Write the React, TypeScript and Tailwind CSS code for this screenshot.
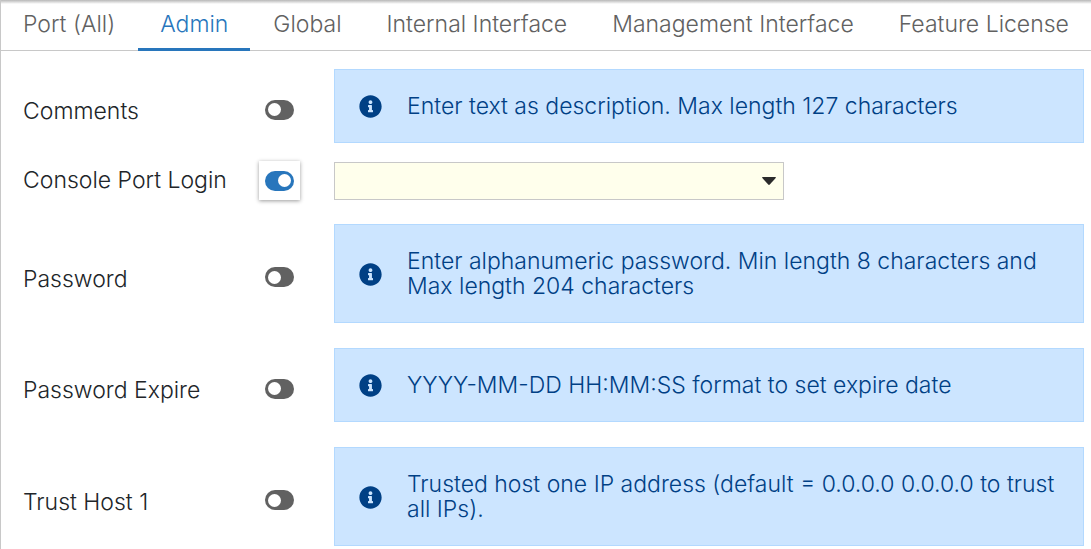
import { useState } from 'react'
import { FaInfoCircle } from 'react-icons/fa'
import { clsx } from 'clsx'

const TABS = [
  'Port (All)',
  'Admin',
  'Global',
  'Internal Interface',
  'Management Interface',
  'Feature License',
]

interface Setting {
  id: string
  label: string
  hint?: string
}

const SETTINGS: Setting[] = [
  { id: 'comments', label: 'Comments', hint: 'Enter text as description. Max length 127 characters' },
  { id: 'console-login', label: 'Console Port Login' },
  {
    id: 'password',
    label: 'Password',
    hint: 'Enter alphanumeric password. Min length 8 characters and Max length 204 characters',
  },
  { id: 'password-expire', label: 'Password Expire', hint: 'YYYY-MM-DD HH:MM:SS format to set expire date' },
  {
    id: 'trust-host-1',
    label: 'Trust Host 1',
    hint: 'Trusted host one IP address (default = 0.0.0.0 0.0.0.0 to trust all IPs).',
  },
]

function Toggle({ id, checked, onChange }: { id: string; checked: boolean; onChange: () => void }) {
  return (
    <span
      className={clsx(
        'flex h-[39px] w-[41px] items-center justify-center bg-white',
        checked ? 'shadow-[0_1px_4px_rgba(0,0,0,0.4)]' : 'mb-1'
      )}
    >
      <input
        id={id}
        type="checkbox"
        checked={checked}
        onChange={onChange}
        className="flex h-5 w-[29px] cursor-pointer appearance-none items-center rounded-full bg-[#616161] px-[3px] before:size-[13px] before:rounded-full before:bg-white checked:justify-end checked:bg-[#2876bc]"
      />
    </span>
  )
}

function InfoBox({ text }: { text: string }) {
  return (
    <div className="mb-[11px] flex items-center gap-[25px] border border-[#b3d9ff] bg-[#cce5ff] pt-6 pr-6 pb-[23px] pl-6 text-[#004085]">
      <FaInfoCircle className="size-[23px] shrink-0" />
      <p>{text}</p>
    </div>
  )
}

function LoginSelect() {
  return (
    <div className="relative w-3/5">
      <select
        aria-label="Console port login value"
        defaultValue=""
        className="block h-[38px] w-full appearance-none border border-[#c8c8c8] bg-[#ffffec] px-2"
      >
        <option value=""></option>
      </select>
      <svg viewBox="0 0 14 8" className="pointer-events-none absolute top-[15px] right-2 h-2 w-[14px] fill-[#2b2b2b]">
        <path d="M0.6 0H13.4Q14.2 0.2 13.7 1L7.8 7.5Q7 8.3 6.2 7.5L0.3 1Q-0.2 0.2 0.6 0Z" />
      </svg>
    </div>
  )
}

export default function App() {
  const [activeTab, setActiveTab] = useState('Admin')
  const [enabled, setEnabled] = useState<Record<string, boolean>>({ 'console-login': true })

  const toggle = (id: string) => setEnabled(prev => ({ ...prev, [id]: !prev[id] }))

  return (
    <main className="min-h-screen overflow-hidden border-l border-[#c8c8c8] bg-white font-['Inter',sans-serif] text-[23px] leading-[25px] font-light text-[#212529]">
      {/* Tabs */}
      <div className="h-1 bg-linear-to-b from-[#b8b8b8] to-white" />
      <nav className="flex gap-px border-b border-[#c8c8c8]">
        {TABS.map(tab => (
          <button
            key={tab}
            onClick={() => setActiveTab(tab)}
            className={clsx(
              '-mb-px border-b-3 px-[22px] pt-2 pb-[11px] whitespace-nowrap',
              activeTab === tab ? 'border-[#2876bc] text-[#2876bc]' : 'border-transparent text-[#616161]'
            )}
          >
            {tab}
          </button>
        ))}
      </nav>

      {/* Settings */}
      <form className="pt-1 pr-[7px] pl-[22px]">
        {SETTINGS.map(({ id, label, hint }) => (
          <div
            key={id}
            className={clsx(
              'grid grid-cols-[236px_75px_minmax(0,1fr)] items-center',
              hint ? 'pt-[14px]' : 'pt-[7px] pb-[10px]'
            )}
          >
            <label htmlFor={id}>{label}</label>
            <Toggle id={id} checked={!!enabled[id]} onChange={() => toggle(id)} />
            {hint ? <InfoBox text={hint} /> : <LoginSelect />}
          </div>
        ))}
      </form>
    </main>
  )
}
